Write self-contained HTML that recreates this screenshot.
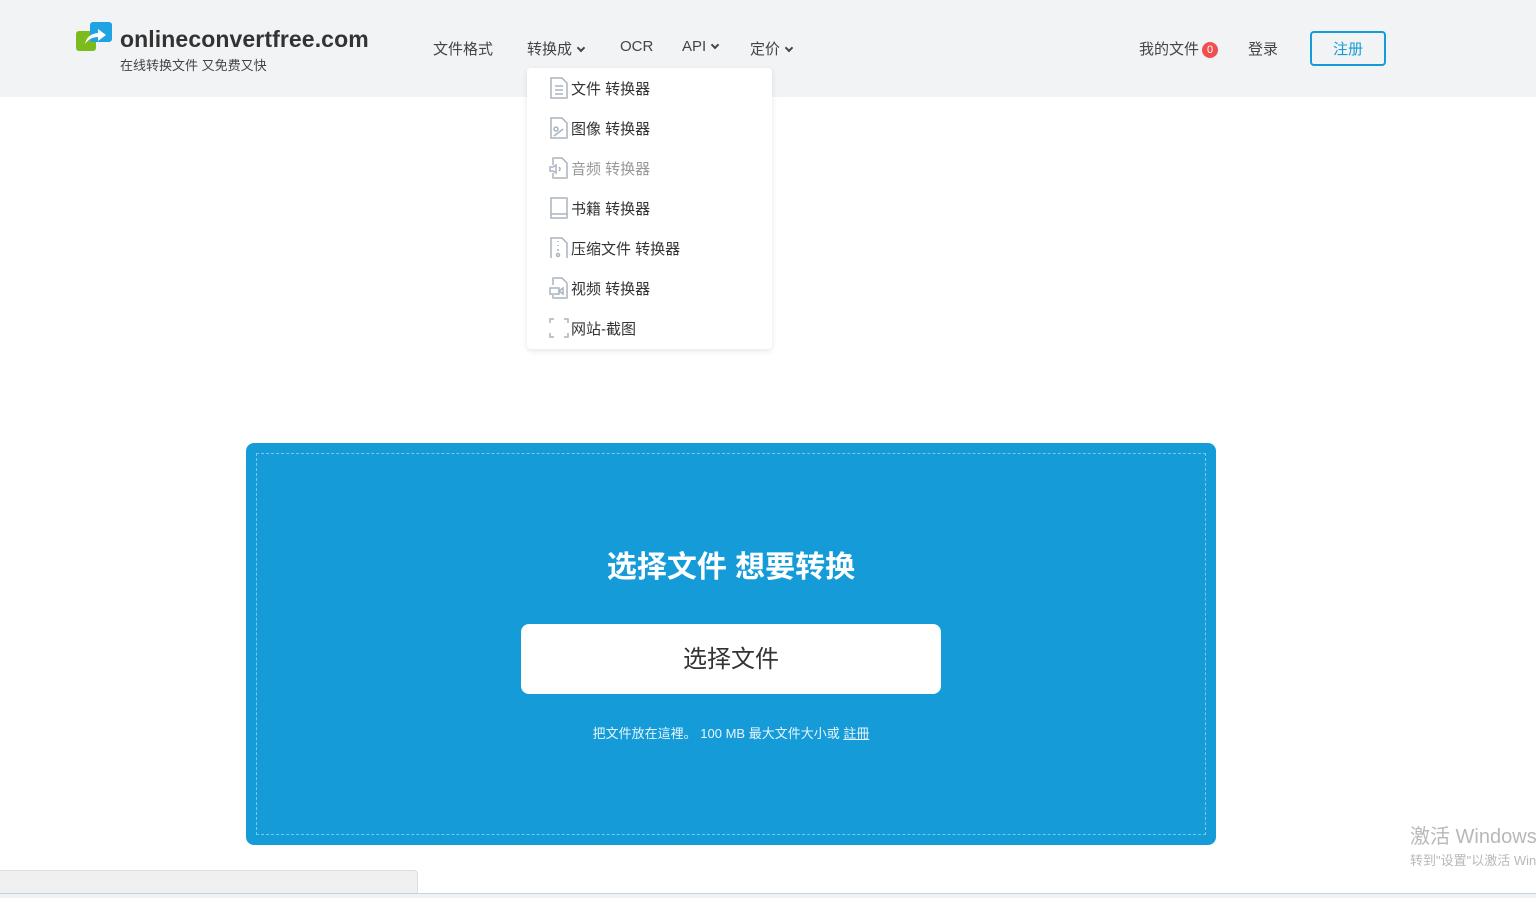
<!DOCTYPE html>
<html><head><meta charset="utf-8"><style>
*{margin:0;padding:0;box-sizing:border-box}
body{width:1536px;height:898px;overflow:hidden;background:#fff;font-family:"Liberation Sans","Noto Sans CJK SC",sans-serif;position:relative;color:#333}
.hdr{position:absolute;left:0;top:0;width:1536px;height:97px;background:#f2f3f5}
.logo{position:absolute;left:76px;top:22px}
.brand{position:absolute;left:120px;top:26px;font-size:23px;font-weight:bold;color:#333;letter-spacing:0.1px}
.tag{position:absolute;left:120px;top:55px;font-size:13px;color:#444}
.nav{position:absolute;top:38px;font-size:15px;color:#444}
.car{display:inline-block;width:6px;height:6px;border-right:2px solid #444;border-bottom:2px solid #444;transform:rotate(45deg);margin-left:6px;position:relative;top:-3px}
.badge{display:inline-block;width:16px;height:16px;border-radius:50%;background:#f05050;color:#fff;font-size:11px;text-align:center;line-height:16px;vertical-align:1px;margin-left:3px}
.reg{position:absolute;left:1310px;top:31px;width:76px;height:35px;border:2px solid #159cd8;border-radius:4px;color:#159cd8;font-size:15px;text-align:center;line-height:33px}
.dd{position:absolute;left:527px;top:68px;width:245px;height:281px;background:#fff;border-radius:4px;box-shadow:0 2px 6px rgba(0,0,0,.1)}
.it{position:absolute;left:22px;height:24px;font-size:15px;color:#333;display:flex;align-items:center}
.it svg{margin-right:2px}
.box{position:absolute;left:246px;top:443px;width:970px;height:402px;background:#159cd8;border-radius:8px}
.inner{position:absolute;left:10px;top:10px;right:10px;bottom:10px;border:1px dashed #7cc6ea}
.h{position:absolute;left:0;right:0;top:104px;text-align:center;color:#fff;font-size:30px;font-weight:bold}
.btn{position:absolute;left:275px;top:181px;width:420px;height:70px;background:#fff;border-radius:8px;text-align:center;line-height:72px;font-size:24px;color:#333}
.note{position:absolute;left:0;right:0;top:280px;text-align:center;color:#e8f5fc;font-size:13px}
.tab{position:absolute;left:0;top:870px;width:418px;height:24px;background:#f0f0f0;border:1px solid #ddd;border-left:none;border-radius:0 4px 0 0}
.bot{position:absolute;left:0;top:893px;width:1536px;height:5px;background:#f0f3f6;border-top:1px solid #c8d0d8}
.wm{position:absolute;left:1410px;top:820px;color:#b8b8b8;font-size:20px;white-space:nowrap}
.wm2{position:absolute;left:1410px;top:850px;color:#b8b8b8;font-size:13px;white-space:nowrap}
</style></head><body>
<div class="hdr">
<svg class="logo" width="36" height="30" viewBox="0 0 36 30"><rect x="0" y="9" width="20" height="20" rx="3" fill="#7cbb1e"/><rect x="14" y="0" width="22" height="20" rx="3" fill="#1fa3e3"/><path d="M9 22 Q11 12 22 11 L22 7 L30 13 L22 19 L22 15 Q14 15 9 22Z" fill="#fff"/></svg>
<div class="brand">onlineconvertfree.com</div>
<div class="tag">在线转换文件 又免费又快</div>
<div class="nav" style="left:433px">文件格式</div>
<div class="nav" style="left:527px">转换成<span class="car"></span></div>
<div class="nav" style="left:620px">OCR</div>
<div class="nav" style="left:682px">API<span class="car"></span></div>
<div class="nav" style="left:750px">定价<span class="car"></span></div>
<div class="nav" style="left:1139px">我的文件<span class="badge">0</span></div>
<div class="nav" style="left:1248px">登录</div>
<div class="reg">注册</div>
</div>
<div class="dd">
<div class="it" style="top:8px"><svg width="20" height="22" viewBox="0 0 20 22" fill="none" stroke="#aab4bf" stroke-width="1.5"><path d="M2 1h11l5 5v15H2z"/><path d="M6 9h8M6 13h8M6 17h8"/></svg>文件 转换器</div>
<div class="it" style="top:48px"><svg width="20" height="22" viewBox="0 0 20 22" fill="none" stroke="#aab4bf" stroke-width="1.5"><path d="M2 1h11l5 5v15H2z"/><circle cx="7" cy="12" r="2"/><path d="M5 19l9-7"/></svg>图像 转换器</div>
<div class="it" style="top:88px;color:#999"><svg width="20" height="22" viewBox="0 0 20 22" fill="none" stroke="#aab4bf" stroke-width="1.5"><path d="M4 8V1h9l5 5v15H4v-5"/><path d="M1 10h3l3-2v8l-3-2H1z"/><path d="M10 10q2 2 0 4"/></svg>音频 转换器</div>
<div class="it" style="top:128px"><svg width="20" height="22" viewBox="0 0 20 22" fill="none" stroke="#aab4bf" stroke-width="1.5"><path d="M2 1h16v20H2z"/><path d="M2 17h16"/></svg>书籍 转换器</div>
<div class="it" style="top:168px"><svg width="20" height="22" viewBox="0 0 20 22" fill="none" stroke="#aab4bf" stroke-width="1.5"><path d="M2 21V1h11l5 5v15"/><path d="M9 4v1M9 8v1M9 12v2"/><circle cx="9" cy="18" r="1.5"/></svg>压缩文件 转换器</div>
<div class="it" style="top:208px"><svg width="20" height="22" viewBox="0 0 20 22" fill="none" stroke="#aab4bf" stroke-width="1.5"><path d="M4 8V1h9l5 5v15H4v-3"/><rect x="1" y="11" width="9" height="6"/><path d="M10 14l4-3v6z"/></svg>视频 转换器</div>
<div class="it" style="top:248px"><svg width="20" height="22" viewBox="0 0 20 22" fill="none" stroke="#aab4bf" stroke-width="1.5"><path d="M1 6V2h4M15 2h4v4M19 16v4h-4M5 20H1v-4"/></svg>网站-截图</div>
</div>
<div class="box"><div class="inner"></div>
<div class="h" style="top:99px">选择文件 想要转换</div>
<div class="btn">选择文件</div>
<div class="note">把文件放在這裡。 100 MB 最大文件大小或 <u>註冊</u></div>
</div>
<div class="tab"></div>
<div class="bot"></div>
<div class="wm">激活 Windows</div>
<div class="wm2">转到"设置"以激活 Windows。</div>
</body></html>
